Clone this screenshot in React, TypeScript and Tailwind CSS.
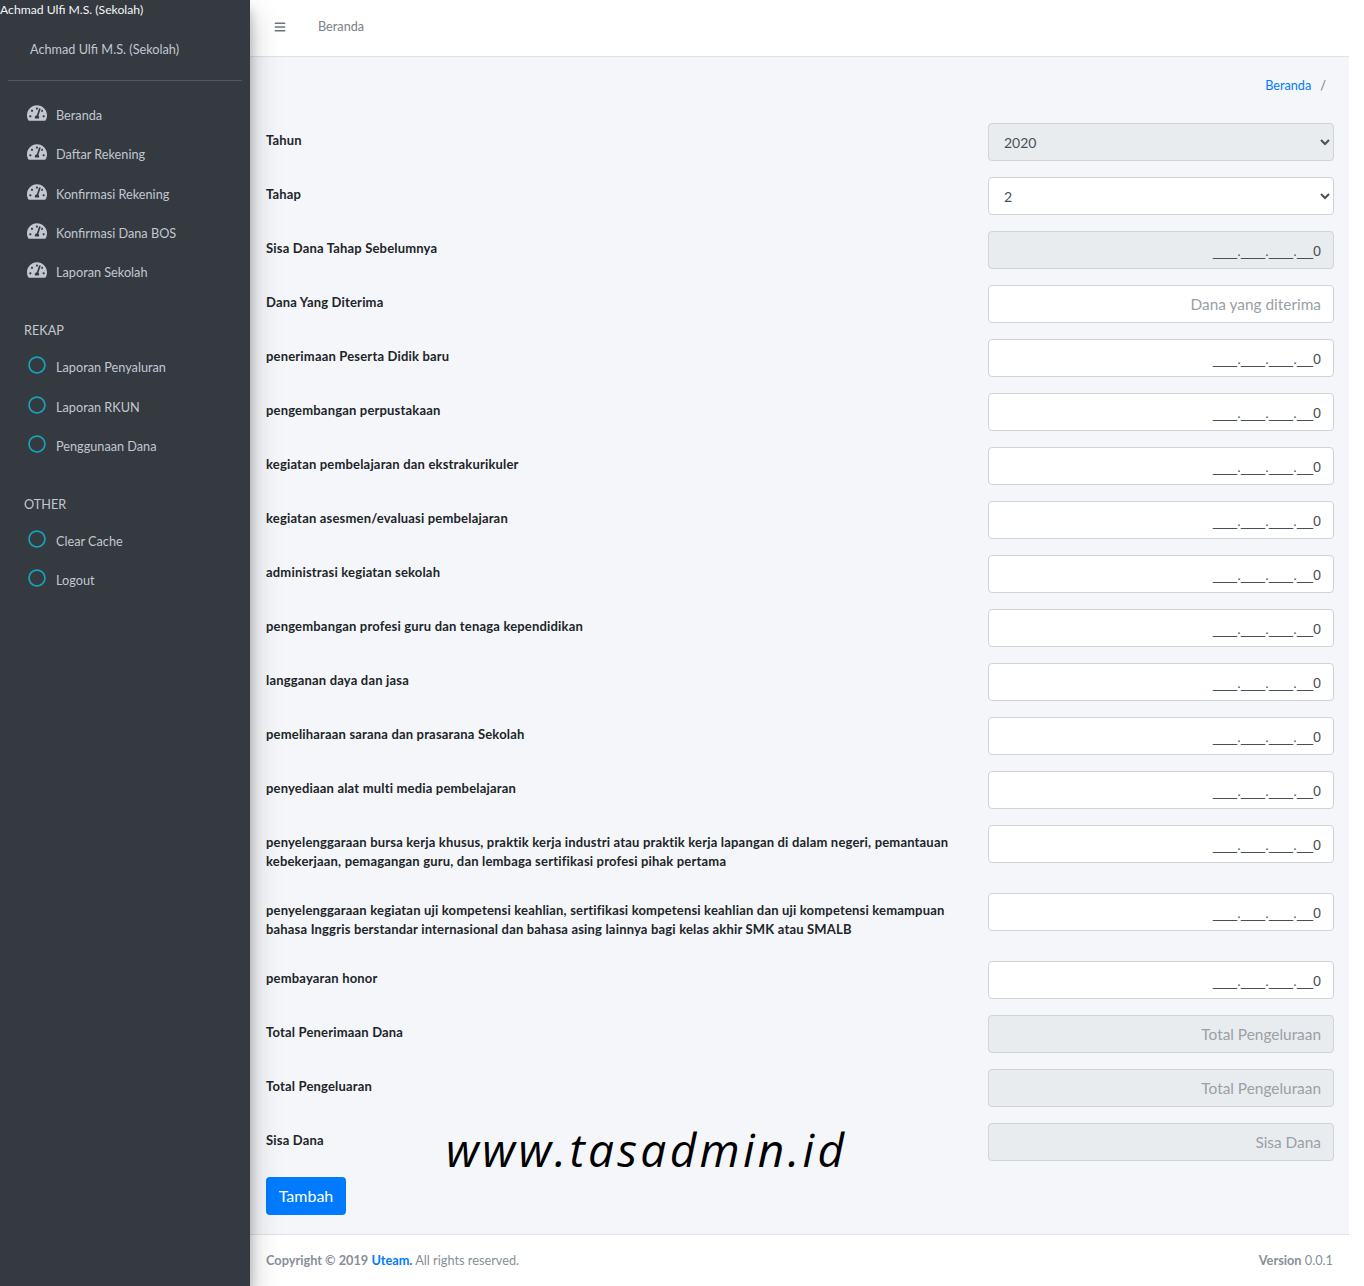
import React from 'react';
import { FaTachometerAlt, FaRegCircle, FaBars } from 'react-icons/fa';

const mask = '___.___.___.__0';

type Row = {
  label: string;
  kind?: 'select' | 'mask' | 'placeholder';
  value?: string;
  placeholder?: string;
  disabled?: boolean;
};

const rows: Row[] = [
  { label: 'Tahun', kind: 'select', value: '2020', disabled: true },
  { label: 'Tahap', kind: 'select', value: '2' },
  { label: 'Sisa Dana Tahap Sebelumnya', disabled: true },
  { label: 'Dana Yang Diterima', kind: 'placeholder', placeholder: 'Dana yang diterima' },
  { label: 'penerimaan Peserta Didik baru' },
  { label: 'pengembangan perpustakaan' },
  { label: 'kegiatan pembelajaran dan ekstrakurikuler' },
  { label: 'kegiatan asesmen/evaluasi pembelajaran' },
  { label: 'administrasi kegiatan sekolah' },
  { label: 'pengembangan profesi guru dan tenaga kependidikan' },
  { label: 'langganan daya dan jasa' },
  { label: 'pemeliharaan sarana dan prasarana Sekolah' },
  { label: 'penyediaan alat multi media pembelajaran' },
  {
    label:
      'penyelenggaraan bursa kerja khusus, praktik kerja industri atau praktik kerja lapangan di dalam negeri, pemantauan kebekerjaan, pemagangan guru, dan lembaga sertifikasi profesi pihak pertama',
  },
  {
    label:
      'penyelenggaraan kegiatan uji kompetensi keahlian, sertifikasi kompetensi keahlian dan uji kompetensi kemampuan bahasa Inggris berstandar internasional dan bahasa asing lainnya bagi kelas akhir SMK atau SMALB',
  },
  { label: 'pembayaran honor' },
  { label: 'Total Penerimaan Dana', kind: 'placeholder', placeholder: 'Total Pengeluraan', disabled: true },
  { label: 'Total Pengeluaran', kind: 'placeholder', placeholder: 'Total Pengeluraan', disabled: true },
  { label: 'Sisa Dana', kind: 'placeholder', placeholder: 'Sisa Dana', disabled: true },
];

const NavItem = ({ label, circle }: { label: string; circle?: boolean }) => (
  <div className="flex h-[39.25px] items-center text-[12.7px] text-[#c2c7d0]">
    <span className="mb-[5px] flex w-[56px] justify-center pl-[18px]">
      {circle ? (
        <FaRegCircle className="text-[18px] text-[#17a2b8]" />
      ) : (
        <FaTachometerAlt className="text-[20px] text-[#c2c7d0]" />
      )}
    </span>
    <span>{label}</span>
  </div>
);

const Sidebar = () => (
  <aside className="relative z-10 w-[250px] shrink-0 bg-[#343a40] shadow-[0_14px_28px_rgba(0,0,0,0.25),0_10px_10px_rgba(0,0,0,0.22)]">
    <div className="text-[12.2px] leading-[19px] text-[#f4f6f9]">Achmad Ulfi M.S. (Sekolah)</div>
    <div className="pl-[30px] pt-[21px] text-[12.7px] leading-[19px] text-[#c2c7d0]">Achmad Ulfi M.S. (Sekolah)</div>
    <div className="mx-2 mt-[21px] border-b border-[#4f5962]" />
    <div className="pt-[15px]">
      <NavItem label="Beranda" />
      <NavItem label="Daftar Rekening" />
      <NavItem label="Konfirmasi Rekening" />
      <NavItem label="Konfirmasi Dana BOS" />
      <NavItem label="Laporan Sekolah" />
    </div>
    <div className="pb-[8px] pl-6 pt-[29px] text-[12.7px] leading-[19px] text-[#c2c7d0]">REKAP</div>
    <NavItem label="Laporan Penyaluran" circle />
    <NavItem label="Laporan RKUN" circle />
    <NavItem label="Penggunaan Dana" circle />
    <div className="pb-[8px] pl-6 pt-[29px] text-[12.7px] leading-[19px] text-[#c2c7d0]">OTHER</div>
    <NavItem label="Clear Cache" circle />
    <NavItem label="Logout" circle />
  </aside>
);

const fieldClass =
  'h-[38px] w-full rounded border border-[#ced4da] bg-white text-[#495057] placeholder:text-[#9aa0a6] disabled:bg-[#e9ecef]';

const Field = ({ row }: { row: Row }) => {
  if (row.kind === 'select') {
    return (
      <select className={`${fieldClass} pl-[11px] pr-3 text-[14px]`} disabled={row.disabled} defaultValue={row.value}>
        <option>{row.value}</option>
      </select>
    );
  }
  if (row.kind === 'placeholder') {
    return (
      <input
        className={`${fieldClass} px-3 pb-[1px] text-right text-[15.4px]`}
        disabled={row.disabled}
        readOnly
        placeholder={row.placeholder}
      />
    );
  }
  return (
    <input
      className={`${fieldClass} px-3 pt-[2px] text-right font-['Liberation_Sans',sans-serif] text-[14.4px]`}
      disabled={row.disabled}
      readOnly
      defaultValue={mask}
    />
  );
};

export default function App() {
  return (
    <div className="flex min-h-[1286px] w-[1349px] font-['Lato',sans-serif]">
      <Sidebar />
      <div className="flex min-w-0 flex-1 flex-col bg-[#f4f6f9]">
        <header className="flex h-[57px] items-center border-b border-[#dee2e6] bg-white pb-[3px] text-[12.7px] text-[#7a828a]">
          <FaBars className="ml-6 text-[12px] text-[#6c757d]" />
          <span className="ml-8">Beranda</span>
        </header>

        <main className="relative flex-1 pl-4 pr-[15px]">
          <div className="flex justify-end pb-[28px] pr-[8px] pt-[19px] text-[12.7px] leading-[19px]">
            <span className="text-[#007bff]">Beranda</span>
            <span className="pl-[9px] text-[#6c757d]">/</span>
          </div>

          {rows.map((row) => (
            <div key={row.label} className="mb-4 flex justify-between">
              <label className="w-[700px] pb-[6px] pt-[8px] text-[13px] font-bold leading-[19px] tracking-[0.18px] text-[#212529]">
                {row.label}
              </label>
              <div className="w-[346px]">
                <Field row={row} />
              </div>
            </div>
          ))}

          <button className="h-[38px] w-[80px] rounded bg-[#007bff] text-base text-white">Tambah</button>

          <div className="absolute left-[196px] top-[1060px] font-['Open_Sans',sans-serif] text-[46px] italic leading-[64px] tracking-[3.3px] text-black">
            www.tasadmin.id
          </div>
        </main>

        <footer className="flex h-[52px] items-center justify-between border-t border-[#dee2e6] bg-white pl-4 pr-4 text-[12.75px] text-[#869099]">
          <div>
            <b>Copyright © 2019 </b>
            <b className="text-[#007bff]">Uteam.</b> All rights reserved.
          </div>
          <div>
            <b>Version</b> 0.0.1
          </div>
        </footer>
      </div>
    </div>
  );
}
